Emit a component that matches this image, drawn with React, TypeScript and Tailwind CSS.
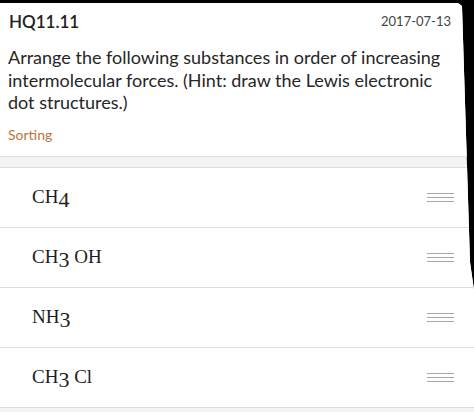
import React from 'react';

// Items to be sorted: text parts, digits are rendered as hanging figures
const ITEMS: string[][] = [
  ['CH', '4'],
  ['CH', '3', ' OH'],
  ['NH', '3'],
  ['CH', '3', ' Cl'],
];

const Handle: React.FC = () => (
  <div className="flex flex-col gap-[3px] w-[27px]">
    <span className="block h-px bg-[#a8a8a8]" />
    <span className="block h-px bg-[#a8a8a8]" />
    <span className="block h-px bg-[#a8a8a8]" />
  </div>
);

const App: React.FC = () => {
  return (
    <div className="w-[474px] h-[412px] bg-black overflow-hidden">
      <div className="h-full bg-[#f4f4f4] rounded-tr-[6px] [clip-path:polygon(0_3px,458px_3px,462px_6px,470px_262px,474px_290px,474px_100%,0_100%)]">
        {/* Question header */}
        <div className="bg-white pt-[12px] pb-[12px] px-[8px] border-b border-[#dedede]" style={{ fontFamily: 'Lato, sans-serif' }}>
          <div className="flex items-start justify-between pr-[15px]">
            <h1 className="text-[17px] font-semibold text-[#222] leading-[20px] pl-px">HQ11.11</h1>
            <span className="text-[13px] text-[#444] leading-[16px] mt-px">2017-07-13</span>
          </div>
          <p className="mt-[14px] pr-[12px] text-[18px] leading-[22.5px] text-[#262626]">
            Arrange the following substances in order of increasing intermolecular forces. (Hint: draw the Lewis electronic dot structures.)
          </p>
          <p className="mt-[12px] text-[14px] leading-[18px] text-[#b8753f]">Sorting</p>
        </div>

        {/* Sortable list */}
        <div className="mt-[10px] bg-white border-t border-[#dedede]">
          {ITEMS.map((parts, i) => (
            <div
              key={i}
              className="h-[60px] flex items-center justify-between pl-[32px] pr-[20px] border-b border-[#dedede]"
            >
              <span className="pt-[4px] text-[19px] text-[#1e1e1e]" style={{ fontFamily: '"Liberation Serif", serif' }}>
                {parts.map((p, j) =>
                  /^\d$/.test(p) ? (
                    <span key={j} className="text-[22px] align-[-4px]">{p}</span>
                  ) : (
                    <span key={j}>{p}</span>
                  )
                )}
              </span>
              <Handle />
            </div>
          ))}
        </div>
      </div>
    </div>
  );
};

export default App;
